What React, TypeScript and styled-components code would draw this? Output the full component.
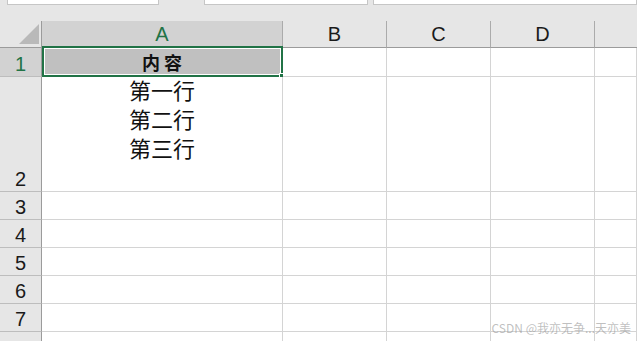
import styled, { createGlobalStyle } from "styled-components";

const GlobalStyle = createGlobalStyle`
  html, body {
    margin: 0;
    padding: 0;
    background: #ffffff;
  }
  body {
    font-family: "Liberation Sans", "Noto Sans CJK SC", sans-serif;
  }
`;

const Page = styled.div`
  position: relative;
  width: 637px;
  height: 341px;
  overflow: hidden;
  background: #ffffff;
`;

const TopBar = styled.div`
  display: flex;
  height: 21px;
  background: #e6e6e6;
`;

const BarBox = styled.div<{ $left: number; $width?: number }>`
  margin-left: ${(p) => p.$left}px;
  width: ${(p) => (p.$width ? `${p.$width}px` : "auto")};
  flex: ${(p) => (p.$width ? "none" : "1")};
  height: 5px;
  background: #ffffff;
  border: 1px solid #c6c6c6;
  border-top: none;
  box-sizing: border-box;
`;

const Sheet = styled.div`
  display: grid;
  grid-template-columns: 42px 241px 104px 104px 104px 1fr;
  grid-template-rows: 27px 29px 115px repeat(6, 28px) 28px;
`;

const Corner = styled.div`
  position: relative;
  background: #e6e6e6;
  border-right: 1px solid #9b9b9b;
  border-bottom: 1px solid #9b9b9b;
  box-sizing: border-box;
`;

const CornerTriangle = styled.div`
  position: absolute;
  right: 2px;
  bottom: 3px;
  width: 0;
  height: 0;
  border-left: 20px solid transparent;
  border-bottom: 20px solid #b9b9b9;
`;

const ColHead = styled.div<{ $active?: boolean; $last?: boolean }>`
  display: flex;
  align-items: center;
  justify-content: center;
  background: ${(p) => (p.$active ? "#d2d2d2" : "#e6e6e6")};
  border-right: ${(p) => (p.$last ? "none" : "1px solid #ababab")};
  border-bottom: 1px solid #9b9b9b;
  box-sizing: border-box;
  font-size: 20px;
  color: ${(p) => (p.$active ? "#217346" : "#1a1a1a")};
  padding-top: 1px;
`;

const RowHead = styled.div<{ $active?: boolean }>`
  display: flex;
  align-items: flex-end;
  justify-content: center;
  padding-bottom: 1px;
  background: ${(p) => (p.$active ? "#d2d2d2" : "#e6e6e6")};
  border-right: 1px solid #9b9b9b;
  border-bottom: 1px solid #bdbdbd;
  box-sizing: border-box;
  font-size: 20px;
  line-height: 22px;
  color: ${(p) => (p.$active ? "#217346" : "#1a1a1a")};
`;

const Cell = styled.div<{ $fill?: string }>`
  position: relative;
  background: ${(p) => p.$fill || "#ffffff"};
  border-right: 1px solid #d4d4d4;
  border-bottom: 1px solid #d4d4d4;
  box-sizing: border-box;
`;

const HeaderCell = styled(Cell)`
  display: flex;
  align-items: center;
  justify-content: center;
  font-family: "Noto Sans CJK SC", sans-serif;
  font-weight: 700;
  font-size: 18px;
  letter-spacing: 4px;
  padding-left: 4px;
  color: #111;
`;

const MultiLineCell = styled(Cell)`
  font-family: "Noto Sans CJK SC", sans-serif;
  font-size: 22px;
  line-height: 29px;
  text-align: center;
  color: #111;
`;

const Lines = styled.div`
  margin-top: -2px;
`;

const Selection = styled.div`
  position: absolute;
  left: 0;
  top: -2px;
  right: -1px;
  bottom: -1px;
  border: 2px solid #217346;
  box-shadow: inset 0 0 0 1px #ffffff;
  pointer-events: none;
`;

const FillHandle = styled.div`
  position: absolute;
  right: -5px;
  bottom: -5px;
  width: 7px;
  height: 7px;
  background: #217346;
  border: 1px solid #ffffff;
  box-sizing: border-box;
`;

const Watermark = styled.div`
  position: absolute;
  right: 6px;
  bottom: 5px;
  font-family: "Noto Sans CJK SC", sans-serif;
  font-size: 12px;
  color: rgba(150, 150, 150, 0.6);
  white-space: nowrap;
`;

const cols = ["A", "B", "C", "D", ""];
const lines = ["第一行", "第二行", "第三行"];
const plainRows = [3, 4, 5, 6, 7, 8];

export default function App() {
  return (
    <Page>
      <GlobalStyle />
      <TopBar>
        <BarBox $left={7} $width={152} />
        <BarBox $left={45} $width={164} />
        <BarBox $left={5} />
      </TopBar>
      <Sheet>
        <Corner>
          <CornerTriangle />
        </Corner>
        {cols.map((c, i) => (
          <ColHead key={i} $active={c === "A"} $last={i === cols.length - 1}>
            {c}
          </ColHead>
        ))}

        <RowHead $active>1</RowHead>
        <HeaderCell $fill="#c0c0c0">
          内容
          <Selection>
            <FillHandle />
          </Selection>
        </HeaderCell>
        <Cell />
        <Cell />
        <Cell />
        <Cell />

        <RowHead>2</RowHead>
        <MultiLineCell>
          <Lines>
            {lines.map((l) => (
              <div key={l}>{l}</div>
            ))}
          </Lines>
        </MultiLineCell>
        <Cell />
        <Cell />
        <Cell />
        <Cell />

        {plainRows.map((r) => [
          <RowHead key={`h${r}`}>{r === 8 ? "" : r}</RowHead>,
          ...cols.map((_, i) => <Cell key={`c${r}-${i}`} />),
        ])}
      </Sheet>
      <Watermark>CSDN @我亦无争...天亦美</Watermark>
    </Page>
  );
}
